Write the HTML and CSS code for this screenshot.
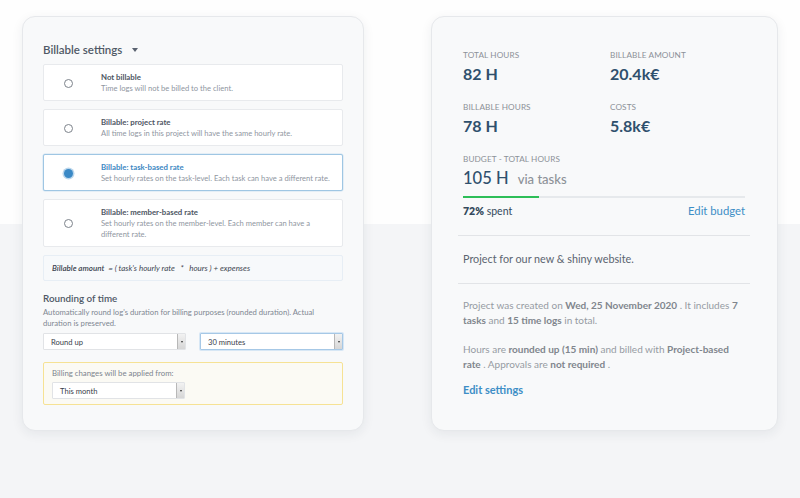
FILE: index.html
```html
<!DOCTYPE html>
<html>
<head>
<meta charset="utf-8">
<link rel="stylesheet" href="styles.css">
</head>
<body>
<div class="page">
  <section class="card settings">
    <h2 class="section-title">Billable settings <span class="caret"></span></h2>
    <div class="options">
      <div class="option">
        <span class="radio"></span>
        <div class="option-text">
          <div class="option-title">Not billable</div>
          <div class="option-desc">Time logs will not be billed to the client.</div>
        </div>
      </div>
      <div class="option">
        <span class="radio"></span>
        <div class="option-text">
          <div class="option-title">Billable: project rate</div>
          <div class="option-desc">All time logs in this project will have the same hourly rate.</div>
        </div>
      </div>
      <div class="option selected">
        <span class="radio"></span>
        <div class="option-text">
          <div class="option-title">Billable: task-based rate</div>
          <div class="option-desc">Set hourly rates on the task-level. Each task can have a different rate.</div>
        </div>
      </div>
      <div class="option">
        <span class="radio"></span>
        <div class="option-text">
          <div class="option-title">Billable: member-based rate</div>
          <div class="option-desc">Set hourly rates on the member-level. Each member can have a different rate.</div>
        </div>
      </div>
    </div>
    <div class="formula"><span class="f-strong">Billable amount</span>  = ( task's hourly rate   *   hours ) + expenses</div>
    <h3 class="sub-title">Rounding of time</h3>
    <p class="sub-desc">Automatically round log's duration for billing purposes (rounded duration). Actual duration is preserved.</p>
    <div class="select-row">
      <div class="select"><span class="select-value">Round up</span><span class="select-arrow"></span></div>
      <div class="select focused"><span class="select-value">30 minutes</span><span class="select-arrow"></span></div>
    </div>
    <div class="notice">
      <div class="notice-label">Billing changes will be applied from:</div>
      <div class="select small"><span class="select-value">This month</span><span class="select-arrow"></span></div>
    </div>
  </section>

  <section class="card summary">
    <div class="stats">
      <div class="stat">
        <div class="stat-label">TOTAL HOURS</div>
        <div class="stat-value">82 H</div>
      </div>
      <div class="stat">
        <div class="stat-label">BILLABLE AMOUNT</div>
        <div class="stat-value">20.4k€</div>
      </div>
      <div class="stat">
        <div class="stat-label">BILLABLE HOURS</div>
        <div class="stat-value">78 H</div>
      </div>
      <div class="stat">
        <div class="stat-label">COSTS</div>
        <div class="stat-value">5.8k€</div>
      </div>
    </div>
    <div class="budget">
      <div class="stat-label">BUDGET - TOTAL HOURS</div>
      <div class="budget-value">105 H <span class="via">via tasks</span></div>
      <div class="progress"><div class="progress-fill" style="width:27%"></div></div>
      <div class="budget-foot">
        <span class="spent"><b>72%</b> spent</span>
        <a class="link">Edit budget</a>
      </div>
    </div>
    <hr class="sep">
    <p class="desc">Project for our new &amp; shiny website.</p>
    <hr class="sep">
    <p class="info">Project was created on <b>Wed, 25 November 2020</b> . It includes <b>7 tasks</b> and <b>15 time logs</b> in total.</p>
    <p class="info">Hours are <b>rounded up (15 min)</b> and billed with <b>Project-based rate</b> . Approvals are <b>not required</b> .</p>
    <a class="link strong">Edit settings</a>
  </section>
</div>
</body>
</html>
```

FILE: styles.css
```css
* { box-sizing: border-box; }
html, body { margin: 0; padding: 0; }
body {
  font-family: "Lato", "Noto Sans", sans-serif;
  width: 800px;
  height: 498px;
  overflow: hidden;
  background: linear-gradient(#fefefe 0, #fefefe 224px, #f4f5f7 224px, #f4f5f7 100%);
}
.page {
  display: flex;
  align-items: stretch;
  gap: 67px;
  padding: 16px 0 0 22px;
  height: 431px;
}
.card {
  background: #f8f9fa;
  border: 1px solid #e6e8eb;
  border-radius: 13px;
  box-shadow: 0 3px 12px rgba(30, 40, 60, 0.07);
}
.settings {
  width: 342px;
  padding: 25px 20px 23px 20px;
}
.section-title {
  margin: 0 0 6px 0;
  font-size: 11.5px;
  line-height: 16px;
  font-weight: 600;
  color: #505966;
  display: flex;
  align-items: center;
}
.caret {
  display: inline-block;
  width: 0; height: 0;
  margin-left: 10px;
  border-left: 3px solid transparent;
  border-right: 3px solid transparent;
  border-top: 4px solid #5a6270;
}
.options { display: flex; flex-direction: column; gap: 8px; }
.option {
  display: flex;
  align-items: center;
  background: #fff;
  border: 1px solid #e8eaed;
  border-radius: 2px;
  padding: 7px 2px 6px 20px;
}
.radio {
  flex: none;
  width: 9px; height: 9px;
  border: 1px solid #7d838b;
  border-radius: 50%;
  margin-right: 28px;
  background: #fff;
}
.selected { border-color: #9fc6e3; box-shadow: 0 0 0 0.5px #cfe3f2; }
.selected .radio {
  border: none;
  background: #3a89c6;
  box-shadow: 0 0 0 1.5px #bcd7ec;
}
.option-text { min-width: 0; }
.option-title {
  font-size: 7.8px;
  line-height: 11px;
  font-weight: 700;
  color: #4d5562;
}
.selected .option-title { color: #3b87c2; }
.option-desc {
  font-size: 7.6px;
  line-height: 11px;
  color: #8f969f;
}
.option:last-child .option-desc { max-width: 222px; }
.formula {
  margin-top: 8px;
  height: 26px;
  display: flex;
  align-items: center;
  padding-left: 8px;
  background: #f7f9fb;
  border: 1px solid #e7eef5;
  border-radius: 2px;
  font-style: italic;
  font-size: 8px;
  color: #3e4652;
  white-space: pre;
}
.f-strong { font-weight: 600; }
.sub-title {
  margin: 10px 0 0 0;
  font-size: 9.8px;
  line-height: 14px;
  font-weight: 600;
  color: #4d5765;
}
.sub-desc {
  margin: 2px 0 0 0;
  font-size: 7.7px;
  line-height: 11px;
  color: #7f8792;
}
.select-row {
  margin-top: 4px;
  display: grid;
  grid-template-columns: 1fr 1fr;
  gap: 14px;
}
.select {
  position: relative;
  height: 17px;
  background: #fff;
  border: 1px solid #e1e3e6;
  border-radius: 1px;
  display: flex;
  align-items: center;
  padding-left: 7px;
  font-size: 7.6px;
  color: #3a414b;
}
.select.focused { border-color: #a6c8e6; box-shadow: 0 0 0 1px #d7e7f5; }
.select-value { flex: 1; }
.select-arrow {
  align-self: stretch;
  width: 8px;
  background: linear-gradient(#f2f2f2, #d6d6d6);
  border-left: 1px solid #b8b8b8;
  display: flex;
  align-items: center;
  justify-content: center;
}
.select-arrow::after {
  content: "";
  width: 0; height: 0;
  border-left: 1.5px solid transparent;
  border-right: 1.5px solid transparent;
  border-top: 2px solid #333;
}
.notice {
  margin-top: 12px;
  background: #fbfaf4;
  border: 1px solid #f6e294;
  border-radius: 2px;
  padding: 5px 8px 5px 8px;
}
.notice-label {
  font-size: 7.8px;
  line-height: 10px;
  color: #7c848e;
}
.select.small { width: 133px; margin-top: 4px; }

.summary {
  width: 347px;
  padding: 33px 32px 20px 31px;
}
.stats {
  display: grid;
  grid-template-columns: 147px 1fr;
  row-gap: 18px;
}
.stat-label {
  font-size: 8.2px;
  line-height: 11px;
  color: #8c9198;
  letter-spacing: 0.1px;
}
.stat-value {
  margin-top: 3px;
  font-size: 16px;
  line-height: 20px;
  font-weight: 700;
  color: #2f506d;
}
.budget { margin-top: 18px; }
.budget-value {
  margin-top: 3px;
  font-size: 16.5px;
  line-height: 20px;
  font-weight: 500;
  color: #2f506d;
}
.via {
  margin-left: 5px;
  font-size: 13px;
  font-weight: 500;
  color: #8d9298;
}
.progress {
  margin-top: 7px;
  height: 2px;
  background: #e6e9ec;
}
.progress-fill { height: 100%; background: #2dbe58; }
.budget-foot {
  margin-top: 6px;
  display: flex;
  justify-content: space-between;
  align-items: center;
  line-height: 14px;
}
.spent { font-size: 10.5px; color: #34495c; }
.spent b { font-weight: 800; }
.link {
  font-size: 11.3px;
  color: #3d8ec6;
  cursor: pointer;
}
.sep {
  border: none;
  border-top: 1px solid #e2e4e7;
  margin: 17px -5px 0 -5px;
}
.desc {
  margin: 16px 0 0 0;
  font-size: 10.8px;
  line-height: 14px;
  color: #5b6470;
}
.info {
  margin: 14px 0 0 0;
  font-size: 10px;
  line-height: 14.5px;
  color: #969ba2;
}
.info + .info { margin-top: 15px; }
.info b { font-weight: 700; color: #80868d; }
.link.strong {
  display: block;
  margin-top: 12px;
  font-size: 11px;
  font-weight: 700;
  line-height: 14px;
}
```
